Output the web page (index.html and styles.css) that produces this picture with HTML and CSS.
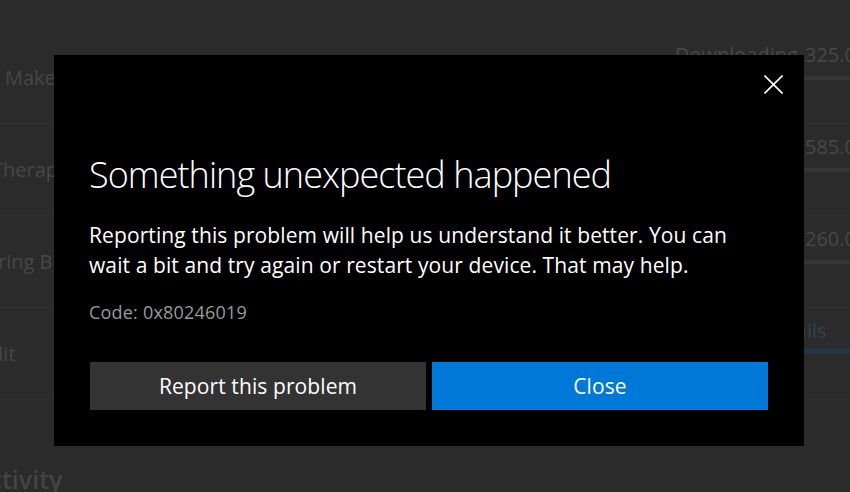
FILE: index.html
```html
<!DOCTYPE html>
<html lang="en">
<head>
<meta charset="utf-8">
<title>Something unexpected happened</title>
<link rel="stylesheet" href="styles.css">
</head>
<body>
<div class="page">
  <div class="list">
    <div class="row">
      <div class="name n1">Maker</div>
      <div class="info">
        <div class="status"><span class="state">Downloading</span><span class="size">325.0 MB</span></div>
        <div class="bar"></div>
      </div>
    </div>
    <div class="row">
      <div class="name n2">Therapy</div>
      <div class="info">
        <div class="status"><span class="state">Pending</span><span class="size">585.0 MB</span></div>
        <div class="bar"></div>
      </div>
    </div>
    <div class="row">
      <div class="name n3">ring Book</div>
      <div class="info">
        <div class="status"><span class="state">Pending</span><span class="size">260.0 MB</span></div>
        <div class="bar"></div>
      </div>
    </div>
    <div class="row">
      <div class="name n4">Edit</div>
      <div class="info">
        <div class="status"><span class="link">Details</span></div>
        <div class="bar accent"></div>
      </div>
    </div>
  </div>
  <h2 class="section">Activity</h2>
</div>

<div class="dialog" role="dialog" aria-labelledby="dlg-title">
  <div class="dlg-head">
    <button class="x" aria-label="Close">
      <svg width="19" height="19" viewBox="0 0 19 19"><path d="M0.5 0.5 L18.5 18.5 M18.5 0.5 L0.5 18.5" stroke="#fff" stroke-width="1.6" fill="none"/></svg>
    </button>
  </div>
  <h1 class="title" id="dlg-title">Something unexpected happened</h1>
  <p class="msg">Reporting this problem will help us understand it better. You can<br>wait a bit and try again or restart your device. That may help.</p>
  <p class="code">Code: 0x80246019</p>
  <div class="actions">
    <button class="btn secondary">Report this problem</button>
    <button class="btn primary">Close</button>
  </div>
</div>
</body>
</html>
```

FILE: styles.css
```css
html, body {
  margin: 0;
  padding: 0;
}
body {
  width: 850px;
  height: 492px;
  overflow: hidden;
  position: relative;
  background: #2b2b2b;
  font-family: "Open Sans", "Noto Sans", sans-serif;
}

/* background page */
.page {
  padding-top: 32px;
}
.row {
  display: grid;
  grid-template-columns: 675px 1fr;
  height: 91px;
  border-bottom: 1px solid #313131;
}
.name {
  align-self: center;
  font-size: 20px;
  color: #474747;
  white-space: nowrap;
}
.n1 { margin-left: 5px; }
.n2 { margin-left: -8px; }
.n3 { margin-left: -2px; }
.n4 { margin-left: -20px; }
.info {
  padding-top: 9px;
}
.status {
  display: flex;
  font-size: 20px;
  line-height: 28px;
  color: #484848;
  white-space: nowrap;
}
.state {
  width: 130px;
}
.link {
  margin-left: 88px;
  color: #2d4254;
}
.bar {
  height: 4px;
  margin-top: 7px;
  background: #353535;
}
.bar.accent {
  height: 5px;
  margin-top: 4px;
  background: #243748;
}
.section {
  margin: 62px 0 0 -27px;
  font-size: 25px;
  font-weight: 600;
  color: #444444;
}

/* dialog */
.dialog {
  position: absolute;
  left: 54px;
  top: 55px;
  width: 750px;
  height: 391px;
  box-sizing: border-box;
  padding: 20px 36px 36px;
  background: #000;
  color: #fff;
  display: flex;
  flex-direction: column;
}
.dlg-head {
  display: flex;
  justify-content: flex-end;
  margin-right: -15px;
}
.x {
  border: 0;
  padding: 0;
  background: transparent;
  width: 19px;
  height: 19px;
  display: block;
}
.x svg { display: block; }
.title {
  margin: 59px 0 0 -1px;
  font-size: 36px;
  line-height: 44px;
  font-weight: 350;
  letter-spacing: -0.95px;
}
.msg {
  margin: 23px 0 0 -1px;
  font-size: 21px;
  line-height: 30px;
  font-weight: 400;
  letter-spacing: 0.1px;
}
.code {
  margin: 20px 0 0 -1px;
  font-size: 18px;
  line-height: 24px;
  letter-spacing: 0.2px;
  color: #9a9a9a;
}
.actions {
  margin-top: auto;
  display: grid;
  grid-template-columns: 1fr 1fr;
  gap: 6px;
}
.btn {
  height: 48px;
  border: 0;
  font-family: inherit;
  font-size: 21px;
  letter-spacing: 0.1px;
  color: #fff;
  padding: 0;
}
.secondary { background: #333333; }
.primary { background: #0078d7; }
```
